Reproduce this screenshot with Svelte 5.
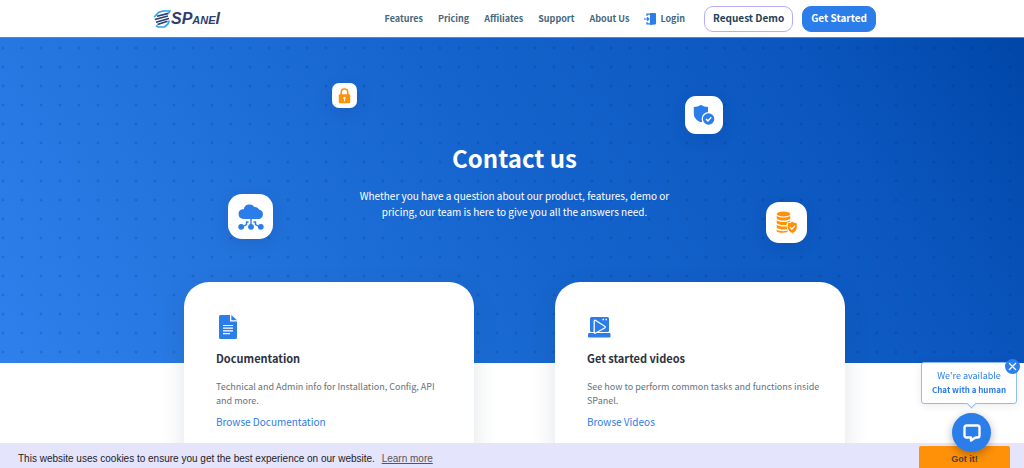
<script>
  const links = ["Features", "Pricing", "Affiliates", "Support", "About Us"];

  const cards = [
    {
      icon: "doc",
      title: "Documentation",
      text: "Technical and Admin info for Installation, Config, API and more.",
      link: "Browse Documentation",
    },
    {
      icon: "video",
      title: "Get started videos",
      text: "See how to perform common tasks and functions inside SPanel.",
      link: "Browse Videos",
    },
  ];

  let chatTip = $state(true);
  let cookies = $state(true);
</script>

<header>
  <div class="bar">
    <a class="logo" href="/" aria-label="SPanel">
      <svg width="18" height="18" viewBox="0 0 18 18" aria-hidden="true">
        <path d="M1.200 7 5.800 2.200 10 1h6.800l-1 2.200" fill="none" stroke="#2aa4f4" stroke-width="1.700" />
        <path d="M16.300 10.500 15 14l-3.500 2.800-6.500.2-2-1.500" fill="none" stroke="#2aa4f4" stroke-width="1.700" />
        <path d="M4 6.200 15.500 3.400M1.800 9.600 15 5.900M3 12.200 16 8.400M4.500 14.600l10-3.400" fill="none" stroke="#2d3e70" stroke-width="1.600" />
      </svg>
      <span class="word">SP<span class="small">ane</span>l</span>
    </a>

    <nav>
      {#each links as l}
        <a href="/">{l}</a>
      {/each}
      <a class="login" href="/">
        <svg width="12" height="12" viewBox="0 0 12 12" aria-hidden="true">
          <path d="M6 0h5a1 1 0 0 1 1 1v9.600a1 1 0 0 1-1 1L6 12z" fill="#2b7de9" />
          <path d="M3 3V1.200h3M3 9v1.800h3M0 6h4.600M3 4.300 4.800 6 3 7.700" fill="none" stroke="#2b7de9" stroke-width="1.200" />
        </svg>
        Login
      </a>
    </nav>

    <div class="actions">
      <a class="btn outline" href="/">Request Demo</a>
      <a class="btn filled" href="/">Get Started</a>
    </div>
  </div>
</header>

<main>
  <section class="hero">
    <div class="hero-inner">
      <h1>Contact us</h1>
      <p>Whether you have a question about our product, features, demo or pricing, our team is here to give you all the answers need.</p>

      <span class="tile lock">
        <svg width="13" height="16" viewBox="0 0 13 16" aria-hidden="true">
          <path d="M3.200 7V4.200a3.300 3.300 0 0 1 6.600 0V7" fill="none" stroke="#ff9108" stroke-width="1.500" />
          <rect x=".8" y="6.300" width="11.400" height="9" rx="1" fill="#ff9108" />
          <circle cx="6.500" cy="10" r="1.200" fill="#fff" />
          <path d="M6.100 10.500h.9v2.700h-.9z" fill="#fff" />
        </svg>
      </span>

      <span class="tile shield">
        <svg width="22" height="22" viewBox="0 0 22 22" aria-hidden="true">
          <path d="M8 .8C10 2.300 12.400 3 15 3v6.500C15 13.700 12.400 16.700 8 18.300 3.600 16.700.8 13.700.8 9.500V3C3.500 3 6 2.300 8 .8z" fill="#2b7de9" />
          <circle cx="15.600" cy="15" r="7" fill="#fff" />
          <circle cx="15.600" cy="15" r="5.700" fill="#2b7de9" />
          <path d="m13 15 1.900 1.900 3.300-3.600" fill="none" stroke="#fff" stroke-width="1.500" />
        </svg>
      </span>

      <span class="tile cloud">
        <svg width="26" height="26" viewBox="0 0 26 26" aria-hidden="true">
          <path d="M5.500 15A4.900 4.900 0 0 1 4.500 5.300h1.200A6 6 0 0 1 16.400 2.900 5 5 0 0 1 21.300 5.800 4.700 4.700 0 0 1 21 15z" fill="#2b7de9" />
          <path d="M13 14v7M10.500 18H8.500V20.500L5 22.500M15.500 18h2V20.500l3.500 2" fill="none" stroke="#2b7de9" stroke-width="1.400" />
          <circle cx="3.200" cy="22.800" r="2.900" fill="#2b7de9" />
          <circle cx="13" cy="22.800" r="2.900" fill="#2b7de9" />
          <circle cx="22.800" cy="22.800" r="2.900" fill="#2b7de9" />
        </svg>
      </span>

      <span class="tile database">
        <svg width="22" height="23" viewBox="0 0 22 23" aria-hidden="true">
          <g fill="#ff9108">
            <ellipse cx="7.500" cy="3" rx="6.800" ry="2.600" />
            <path d="M.7 4.800c2 2.400 11.600 2.400 13.600 0v2.600c-2 2.700-11.600 2.700-13.600 0z" />
            <path d="M.7 9.300c2 2.400 11.600 2.400 13.600 0v2.600c-2 2.700-11.600 2.700-13.600 0z" />
            <path d="M.7 13.800c2 2.400 11.600 2.400 13.600 0v2.600c-2 2.700-11.600 2.700-13.600 0z" />
            <path d="M.7 18.200c2 2.200 8 2.400 11 1.300v1.600c-3 1-9 .9-11-.7z" />
          </g>
          <path d="M16.300 10.200c1.500 1.100 3.200 1.600 5 1.600v4.400c0 2.900-1.900 5-5 6.300-3.100-1.300-5-3.400-5-6.300v-4.400c1.800 0 3.500-.5 5-1.600z" fill="#ff9108" stroke="#fff" />
          <path d="m13.900 16.200 1.900 1.900 3-3.300" fill="none" stroke="#fff" stroke-width="1.200" />
        </svg>
      </span>
    </div>
  </section>

  <section class="cards">
    {#each cards as c}
      <article>
        <div class="icon">
          {#if c.icon === "doc"}
            <svg width="24" height="24" viewBox="0 0 24 24" aria-hidden="true">
              <path d="M4.500 0H14v6.500h7v16a1.500 1.500 0 0 1-1.500 1.500h-15A1.500 1.500 0 0 1 3 22.500v-21A1.500 1.500 0 0 1 4.500 0z" fill="#2b7de9" />
              <path d="M15.300 0 21 5.300h-5.700z" fill="#2b7de9" />
              <path d="M7 10.500h10M7 13.200h10M7 15.900h10M7 18.600h7" stroke="#fff" stroke-width="1.200" />
            </svg>
          {:else}
            <svg width="24" height="24" viewBox="0 0 24 24" aria-hidden="true">
              <rect x="3" y="2" width="19" height="15" rx="1.500" fill="#2b7de9" />
              <rect x="1" y="18" width="22.500" height="4.500" rx="1.200" fill="#2b7de9" />
              <path d="M7.200 6v11.300c0 1 .8 1.200 1.500.7l9-5c.8-.5.800-1.300 0-1.800L8.700 5.500c-.8-.5-1.500-.2-1.500.5z" fill="#2b7de9" stroke="#fff" stroke-width="1.300" />
              <path d="M15.500 4.400H17M18.500 4.400H20" stroke="#fff" stroke-width="1.500" />
            </svg>
          {/if}
        </div>
        <h2>{c.title}</h2>
        <p>{c.text}</p>
        <a href="/">{c.link}</a>
      </article>
    {/each}
  </section>
</main>

{#if cookies}
  <div class="cookies" role="dialog" aria-label="Cookies">
    <span>This website uses cookies to ensure you get the best experience on our website. <a href="/">Learn more</a></span>
    <button onclick={() => (cookies = false)}>Got it!</button>
  </div>
{/if}

<div class="chat">
  {#if chatTip}
    <div class="tip">
      <span>We're available</span>
      <strong>Chat with a human</strong>
      <button class="close" aria-label="Close" onclick={() => (chatTip = false)}>
        <svg width="15" height="15" viewBox="0 0 15 15" aria-hidden="true">
          <path d="m4 4 7 7M11 4l-7 7" stroke="#fff" stroke-width="1.300" />
        </svg>
      </button>
    </div>
  {/if}
  <button class="bubble" aria-label="Open chat" onclick={() => (chatTip = !chatTip)}>
    <svg width="20" height="20" viewBox="0 0 20 20" aria-hidden="true">
      <path d="M4.500 2.500h11a2 2 0 0 1 2 2v8a2 2 0 0 1-2 2h-2L9 17.500v-3H4.500a2 2 0 0 1-2-2v-8a2 2 0 0 1 2-2z" fill="none" stroke="#fff" stroke-width="2.400" stroke-linejoin="round" />
    </svg>
  </button>
</div>

<style>
  :global(body) {
    background: #fff;
    font-family: "Noto Sans CJK SC", "Noto Sans", sans-serif;
    overflow-x: hidden;
  }
  a { text-decoration: none; }

  /* --- Header --- */
  header { padding-left: 5px; background: #fff; }
  .bar {
    display: flex; align-items: center; height: 37px;
    max-width: 723px; margin: 0 auto;
  }
  .logo { display: flex; align-items: center; color: #2d3e70; }
  .word {
    font: italic bold 16px/18px "Liberation Sans", Arial, sans-serif;
  }
  .small { font-variant: small-caps; }
  nav { display: flex; align-items: center; gap: 15px; margin-left: auto; }
  nav a { color: #46677d; font-size: 9px; font-weight: 600; line-height: 16px; }
  .login { display: flex; align-items: center; gap: 4px; }
  .actions { display: flex; gap: 9px; margin-left: 19px; }
  .btn {
    box-sizing: border-box; height: 26px; padding: 0 8px;
    border: 1px solid #2b7de9; border-radius: 9px;
    font-size: 10px; font-weight: 700; line-height: 22px; white-space: nowrap;
  }
  .outline { border-color: #b4aefb; color: #234258; }
  .filled { background: #2b7de9; color: #fff; }

  /* --- Hero --- */
  .hero {
    padding: 0 0 143px 5px;
    border-top: 1px solid #4c86d4;
    background:
      radial-gradient(circle at 3px 10px, rgba(0, 40, 110, 0.3) 0, rgba(0, 40, 110, 0) 2px) 0 0 / 19px 19px,
      linear-gradient(58deg, #2f80ec 0%, #2373dc 25%, #1463cc 52%, #0b57bf 80%, #0046a8 100%);
  }
  .hero-inner {
    position: relative; max-width: 661px; margin: 0 auto; padding-top: 103px;
    color: #fff; text-align: center;
  }
  h1 { margin: 0; font-size: 24px; font-weight: 700; line-height: 34px; }
  .hero p { max-width: 330px; margin: 13px auto 0; font-size: 10px; line-height: 16px; }
  .tile {
    position: absolute; display: grid; place-items: center;
    background: #fff; box-shadow: 0 4px 16px rgba(0, 40, 110, 0.15);
  }
  .lock { left: 148px; top: 45px; width: 25px; height: 25px; border-radius: 7px; }
  .shield { left: 501px; top: 58px; width: 38px; height: 38px; border-radius: 11px; }
  .cloud { left: 44px; top: 156px; width: 45px; height: 45px; border-radius: 14px; }
  .database { left: 582px; top: 164px; width: 41px; height: 41px; border-radius: 13px; }

  /* --- Cards --- */
  .cards {
    position: relative; display: grid; grid-template-columns: 1fr 1fr; gap: 81px;
    max-width: 661px; margin: -81px auto 0; padding-left: 5px;
  }
  article {
    padding: 33px 24px 40px 32px; border-radius: 25px; background: #fff;
    box-shadow: 0 8px 24px rgba(35, 66, 88, 0.14);
  }
  .icon { display: flex; height: 24px; }
  h2 { margin: 11px 0 0; color: #2d3142; font-size: 11px; font-weight: 700; line-height: 16px; }
  article p { margin: 14px 0 0; color: #5f7480; font-size: 9px; line-height: 14px; }
  article a { display: block; margin-top: 6px; color: #2b7de9; font-size: 10px; line-height: 16px; }

  /* --- Cookie bar --- */
  .cookies {
    position: fixed; left: 0; right: 0; bottom: -7px;
    display: flex; align-items: center; justify-content: space-between;
    padding: 3px 14px 3px 18px; background: #e5e4fd; color: #222;
    font: 10px/16px "Liberation Sans", Helvetica, Arial, sans-serif;
  }
  .cookies a { margin-left: 4px; color: #555; text-decoration: underline; }
  .cookies button {
    width: 91px; height: 26px; border: 0; border-radius: 2px; background: #ff9108; color: #444;
    font: bold 9px/16px "Liberation Sans", Helvetica, Arial, sans-serif;
  }

  /* --- Chat --- */
  .chat {
    position: fixed; right: 7px; bottom: 16px;
    display: flex; flex-direction: column; align-items: flex-end; gap: 9px;
  }
  .tip {
    position: relative; display: flex; flex-direction: column;
    box-sizing: border-box; width: 96px; height: 42px; padding-top: 6px;
    border: 1px solid #8fbcf5; border-radius: 3px; background: #fff;
    color: #2b7de9; font-size: 9px; line-height: 14px; text-align: center;
    box-shadow: 0 2px 10px rgba(0, 0, 0, 0.08);
  }
  .tip strong { font-size: 8px; }
  .tip::after {
    content: ""; position: absolute; bottom: -4px; left: 46px;
    width: 6px; height: 6px; background: #fff; transform: rotate(45deg);
    border: solid #8fbcf5; border-width: 0 1px 1px 0;
  }
  .close {
    position: absolute; top: -4px; right: -4px;
    width: 15px; height: 15px; padding: 0; border: 0; border-radius: 50%;
    display: grid; place-items: center; background: #2b7de9;
  }
  .bubble {
    display: grid; place-items: center; width: 39px; height: 39px; padding: 0;
    margin-right: 26px; border: 0; border-radius: 50%; background: #2b7de9;
    box-shadow: 0 3px 10px rgba(0, 0, 0, 0.3);
  }
</style>
